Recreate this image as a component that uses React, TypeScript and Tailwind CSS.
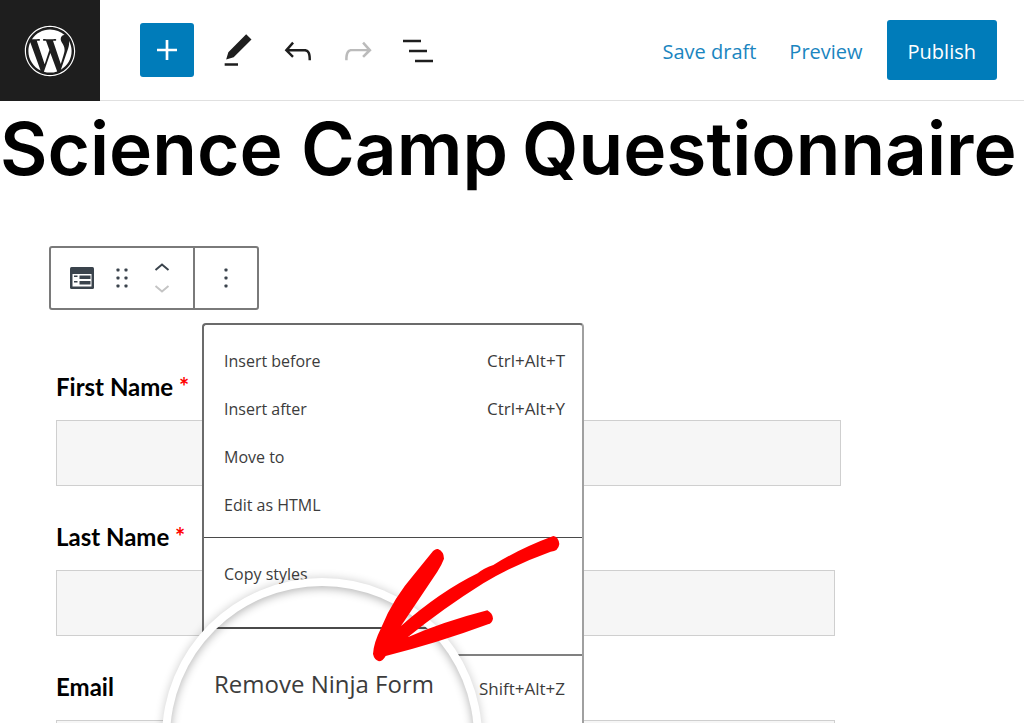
import React from 'react';
import { FaWordpress } from 'react-icons/fa6';

interface ToolIconProps {
  label: string;
  path: string;
  disabled?: boolean;
}

const tools: ToolIconProps[] = [
  {
    label: 'Edit',
    path: 'M20.1 5.1L16.9 2 6.2 12.7l-1.3 4.4 4.5-1.3L20.1 5.1zM4 20.8h8v-1.5H4v1.5z',
  },
  {
    label: 'Undo',
    path: 'M18.3 11.7c-.6-.6-1.4-.9-2.3-.9H6.7l2.9-3.3-1.1-1-4.5 5L8.5 16l1-1-2.7-2.7H16c.5 0 .9.2 1.3.5 1 1 1 3.4 1 4.5v.3h1.5v-.2c0-1.5 0-4.3-1.5-5.7z',
  },
  {
    label: 'Redo',
    path: 'M15.6 6.5l-1.1 1 2.9 3.3H8c-.9 0-1.7.3-2.3.9-1.4 1.5-1.4 4.2-1.4 5.6v.2h1.5v-.3c0-1.1 0-3.5 1-4.5.3-.3.7-.5 1.3-.5h9.2L14.5 15l1.1 1.1 4.6-4.6-4.6-5z',
    disabled: true,
  },
  {
    label: 'Document overview',
    path: 'M13.8 5.2H3v1.5h10.8V5.2zm-3.6 12v1.5H21v-1.5H10.2zm7.2-6H6.6v1.5h10.8v-1.5z',
  },
];

const fields = [
  { id: 'first-name', label: 'First Name', required: true, width: 'max-w-[785px]' },
  { id: 'last-name', label: 'Last Name', required: true, width: 'max-w-[779px]' },
  { id: 'email', label: 'Email', required: false, width: 'max-w-[779px]' },
];

const ToolButton: React.FC<ToolIconProps> = ({ label, path, disabled }) => (
  <button aria-label={label} disabled={disabled} className="text-[#1e1e1e] disabled:text-[#bbbbbb]">
    <svg viewBox="0 0 24 24" className="w-10 h-10" fill="currentColor">
      <path d={path} />
    </svg>
  </button>
);

const EditorHeader: React.FC = () => (
  <header className="flex items-center h-[101px] border-b border-[#e0e0e0]">
    <a
      href="#dashboard"
      aria-label="View posts"
      className="flex items-center justify-center w-[100px] h-[101px] pt-0.5 bg-[#1e1e1e] text-white"
    >
      <FaWordpress size={52} />
    </a>
    <button
      aria-label="Add block"
      className="flex items-center justify-center w-[54px] h-[54px] ml-10 mr-6 rounded-[3px] bg-[#007cba] text-white"
    >
      <svg viewBox="0 0 24 24" className="w-10 h-10" fill="currentColor">
        <path d="M18 11.2h-5.2V6h-1.6v5.2H6v1.6h5.2V18h1.6v-5.2H18z" />
      </svg>
    </button>
    <div className="flex items-center gap-5 pt-0.5">
      {tools.map((tool) => (
        <ToolButton key={tool.label} {...tool} />
      ))}
    </div>
    <div className="flex items-center ml-auto mr-[27px] text-[20px] text-[#1a85c0]">
      <button className="pt-1 mr-[33px]">Save draft</button>
      <button className="pt-1 mr-6">Preview</button>
      <button className="h-[60px] pt-1 px-[21px] rounded-[3px] bg-[#007cba] text-white">Publish</button>
    </div>
  </header>
);

const BlockToolbar: React.FC = () => (
  <div className="flex w-[210px] h-[64px] ml-[49px] border-2 border-[#7a7a7a] rounded-[3px] text-[#3a434c]">
    <div className="flex items-center w-[144px] pl-[19px] border-r-2 border-[#7a7a7a]">
      <button aria-label="Ninja Form">
        <svg viewBox="0 0 24 22" className="w-6 h-[22px]">
          <rect width="24" height="22" rx="1.5" fill="currentColor" />
          <rect x="2.5" y="7" width="19" height="12.5" fill="#fff" />
          <path d="M4 9.2h3.5M4 14.8h3.5" stroke="currentColor" strokeWidth="1.4" />
          <path d="M9.5 8.5h11v3.6h-11zM9.5 14h11v3.6h-11z" fill="currentColor" />
        </svg>
      </button>
      <button aria-label="Drag" className="ml-[22px]">
        <svg viewBox="0 0 12 20" className="w-3 h-5" fill="currentColor">
          {[2, 10].map((x) =>
            [2, 10, 18].map((y) => (
              <rect key={`${x}-${y}`} x={x - 1.5} y={y - 1.5} width="3" height="3" rx="0.8" />
            ))
          )}
        </svg>
      </button>
      <div className="flex flex-col gap-[14px] ml-[26px]">
        <button aria-label="Move up">
          <svg viewBox="0 0 16 8" className="w-4 h-2" fill="none" stroke="currentColor" strokeWidth="2">
            <path d="M1.5 7L8 1.6 14.5 7" />
          </svg>
        </button>
        <button aria-label="Move down" disabled className="text-[#c4c4c4]">
          <svg viewBox="0 0 16 8" className="w-4 h-2" fill="none" stroke="currentColor" strokeWidth="2">
            <path d="M1.5 1L8 6.4 14.5 1" />
          </svg>
        </button>
      </div>
    </div>
    <button aria-label="Options" className="flex items-center justify-center flex-1">
      <svg viewBox="0 0 4 20" className="w-1 h-5" fill="currentColor">
        {[2, 10, 18].map((y) => (
          <rect key={y} x="0.5" y={y - 1.5} width="3" height="3" rx="0.8" />
        ))}
      </svg>
    </button>
  </div>
);

interface MenuItemProps {
  label: string;
  shortcut?: string;
}

const MenuItem: React.FC<MenuItemProps> = ({ label, shortcut }) => (
  <button role="menuitem" className="flex items-center justify-between w-full h-12 pl-5 pr-[17px]">
    <span>{label}</span>
    {shortcut && <span className="text-[17px]">{shortcut}</span>}
  </button>
);

const OptionsMenu: React.FC = () => (
  <div
    role="menu"
    className="absolute left-[202px] top-[323px] w-[382px] pt-3 bg-white border-2 border-[#6b6b6b] border-r-[#a0a0a0] rounded-t-[4px] text-[16px] text-[#3c3c3c]"
  >
    <div className="pb-2">
      <MenuItem label="Insert before" shortcut="Ctrl+Alt+T" />
      <MenuItem label="Insert after" shortcut="Ctrl+Alt+Y" />
      <MenuItem label="Move to" />
      <MenuItem label="Edit as HTML" />
    </div>
    <div className="pt-3 pb-14 border-t border-[#4a4a4a]">
      <MenuItem label="Copy styles" />
    </div>
    <div className="flex justify-end h-32 pt-5 px-[17px] border-t-2 border-[#808080]">
      <span className="text-[17px]">Shift+Alt+Z</span>
    </div>
  </div>
);

const Magnifier: React.FC = () => (
  <div className="absolute left-[162px] top-[578px] w-80 h-80 rounded-full bg-white p-2 shadow-[0_0_10px_rgba(0,0,0,0.2)]">
    <div className="h-full pt-[41px] rounded-full overflow-hidden shadow-[inset_0_2px_10px_rgba(0,0,0,0.3)]">
      <button className="w-full h-28 pl-1 border-t-2 border-[#4a4a4a] text-[24px] text-[#3c3c3c] whitespace-nowrap">
        Remove Ninja Form
      </button>
    </div>
  </div>
);

const Arrow: React.FC = () => (
  <svg
    viewBox="90 30 600 420"
    className="absolute left-[370px] top-[530px] w-[200px] h-[140px] pointer-events-none"
    fill="#ff0000"
    aria-hidden="true"
  >
    <path d="M640 48Q655 50 658 72Q655 94 632 95Q520 135 430 190Q310 265 203 352Q310 305 442 271Q458 280 459 296Q456 310 444 313Q290 370 137 408Q128 424 117 424Q103 420 99 402Q100 370 125 320Q160 235 225 160L275 98Q284 86 294 87Q312 95 312 116Q305 135 292 155L183 318Q300 215 413 160Q430 145 460 135Q540 85 640 48Z" />
  </svg>
);

export default function App() {
  return (
    <div className="relative h-screen overflow-hidden bg-white font-['Open_Sans','Noto_Sans',sans-serif]">
      <EditorHeader />
      <main>
        <h1 className="flex gap-[14px] h-[145px] pt-1 font-['Inter',sans-serif] text-[73px] leading-[88px] font-semibold text-black whitespace-nowrap">
          <span>Science Camp</span>
          <span>Questionnaire</span>
        </h1>
        <BlockToolbar />
        <form className="flex flex-col gap-9 pt-[62px] px-14 font-['Lato',sans-serif]">
          {fields.map((field) => (
            <div key={field.id}>
              <label htmlFor={field.id} className="block mb-[18px] text-[24px] leading-[30px] font-bold text-black">
                {field.label}
                {field.required && <span className="text-[#ff0000]"> *</span>}
              </label>
              <input
                id={field.id}
                type="text"
                className={`block w-full h-[66px] px-4 bg-[#f6f6f6] border border-[#cfcfcf] ${field.width}`}
              />
            </div>
          ))}
        </form>
      </main>
      <OptionsMenu />
      <Magnifier />
      <Arrow />
    </div>
  );
}
